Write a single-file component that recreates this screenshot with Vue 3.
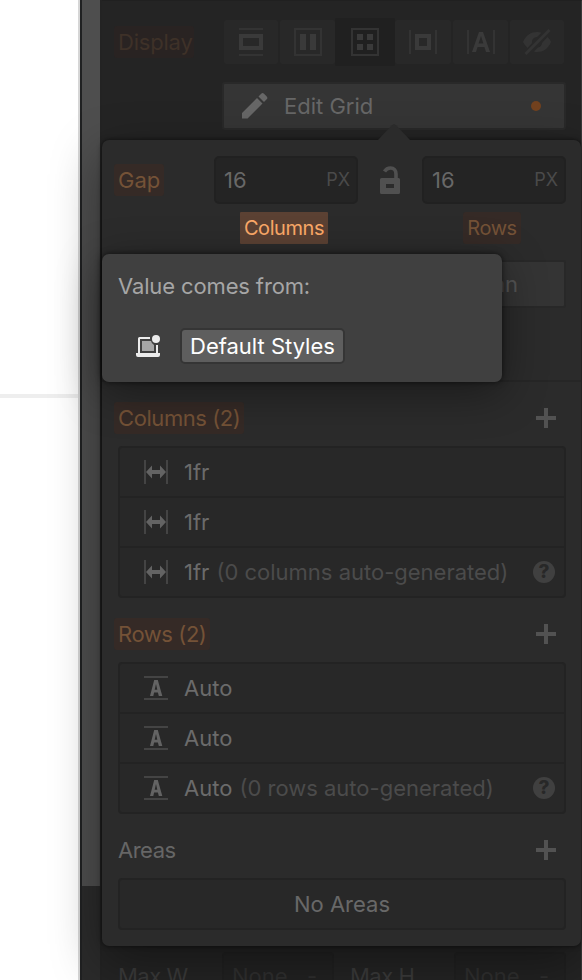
<script setup>
    import { reactive } from 'vue';

    const displayModes = ['block', 'flex', 'grid', 'inline-block', 'inline', 'none'];

    const state = reactive({
        display: 'grid',
        columnGap: 16,
        rowGap: 16
    });

    const tracks = [
        {
            title: 'Columns (2)',
            icon: 'fr',
            items: [{size: '1fr'}, {size: '1fr'}, {size: '1fr', note: '(0 columns auto-generated)'}]
        },
        {
            title: 'Rows (2)',
            icon: 'auto',
            items: [{size: 'Auto'}, {size: 'Auto'}, {size: 'Auto', note: '(0 rows auto-generated)'}]
        }
    ];
</script>

<template>
    <div class="main">
        <div class="canvas">
            <div class="rule"></div>
        </div>
        <div class="gutter">
            <div class="thumb"></div>
        </div>
        <div class="panel">
            <div class="row display">
                <span class="chip faint">Display</span>
                <div class="modes">
                    <button
                        v-for="mode in displayModes"
                        :key="mode"
                        type="button"
                        :class="{active: state.display === mode}"
                        @click="state.display = mode"
                    >
                        <svg width="28" height="28" viewBox="0 0 28 28">
                            <g v-if="mode === 'block'">
                                <path class="thin" d="M2 0h24v2H2zM2 26h24v2H2z" />
                                <path fill-rule="evenodd" d="M2 6h24v16H2zM6 10v8h16v-8z" />
                            </g>
                            <g v-else-if="mode === 'flex'">
                                <path class="thin" fill-rule="evenodd" d="M0 0h28v28H0zM2 2v24h24V2z" />
                                <path d="M6 6h6v16H6zM16 6h6v16h-6z" />
                            </g>
                            <g v-else-if="mode === 'grid'">
                                <path class="thin" fill-rule="evenodd" d="M0 0h28v28H0zM2 2v24h24V2z" />
                                <path d="M6 6h6v6H6zM16 6h6v6h-6zM6 16h6v6H6zM16 16h6v6h-6z" />
                            </g>
                            <g v-else-if="mode === 'inline-block'">
                                <path class="thin" d="M0 2h2v24H0zM26 2h2v24h-2z" />
                                <path fill-rule="evenodd" d="M6 6h16v16H6zM10 10v8h8v-8z" />
                            </g>
                            <g v-else-if="mode === 'inline'">
                                <path class="thin" d="M0 2h2v24H0zM26 2h2v24h-2z" />
                                <path fill-rule="evenodd" d="M5 24L12 4h4l7 20h-4l-1.600-5h-6.800L9 24zM11.600 15.500h4.800L14 8z" />
                            </g>
                            <g v-else class="thin">
                                <path d="M0 14C3 7 8 4 14 4c2 0 3 .3 4.500 .8L14 9a5 5 0 0 0-5 6L4.500 20C2.500 18 1 16 0 14z" />
                                <path d="M28 14c-3 7-8 10-14 10-1 0-2-.1-3-.5l4-4a5 5 0 0 0 4-4.500L24.500 9c1.500 1.500 2.700 3 3.500 5z" />
                                <path d="M1.500 25L25.500 1l2 2L3.500 27z" />
                            </g>
                        </svg>
                    </button>
                </div>
            </div>
            <button type="button" class="edit">
                <svg width="26" height="26" viewBox="0 0 26 26">
                    <path d="M0 20L15 5l5.500 5.500L5.500 25.500H0zM16.500 3.500l2.700-2.700a2 2 0 0 1 2.800 0L24.700 3.500a2 2 0 0 1 0 2.800L22 9z" />
                </svg>
                <span>Edit Grid</span>
                <i class="dot"></i>
            </button>
            <div class="row sizes">
                <span>Max W</span>
                <div class="none"><span>None</span><span>-</span></div>
                <span class="second">Max H</span>
                <div class="none"><span>None</span><span>-</span></div>
            </div>
        </div>

        <div class="popover">
            <div class="gap">
                <div class="gap-label"><span class="chip">Gap</span></div>
                <div class="field"><span>{{ state.columnGap }}</span><small>PX</small></div>
                <svg class="lock" width="20" height="28" viewBox="0 0 20 28">
                    <path d="M4.500 5.500C6 3 8 2 10.500 2c3.500 0 5.500 2.500 5.500 6v4" fill="none" stroke="#505050" stroke-width="3.600" />
                    <path fill-rule="evenodd" d="M1.500 12h17a1.500 1.500 0 0 1 1.500 1.500v13a1.500 1.500 0 0 1-1.500 1.500h-17A1.500 1.500 0 0 1 0 26.500v-13A1.500 1.500 0 0 1 1.500 12zM6 18v4h8v-4z" />
                </svg>
                <div class="field"><span>{{ state.rowGap }}</span><small>PX</small></div>
                <span class="chip small bright under-first">Columns</span>
                <span class="chip small under-second">Rows</span>
            </div>
            <div class="flow">
                <div class="direction">
                    <span>Column</span>
                </div>
            </div>
            <div v-for="track in tracks" :key="track.title" class="section">
                <div class="head">
                    <span class="chip">{{ track.title }}</span>
                    <svg width="20" height="20" viewBox="0 0 20 20"><path d="M8 0h4v8h8v4h-8v8H8v-8H0V8h8z" /></svg>
                </div>
                <div class="list">
                    <div v-for="(item, index) in track.items" :key="index" class="item">
                        <svg v-if="track.icon === 'fr'" width="24" height="24" viewBox="0 0 24 24">
                            <path class="thin" d="M0 0h2v24H0zM22 0h2v24h-2z" />
                            <path d="M2 12L8 5.500V10h8V5.500L22 12l-6 6.500V14H8v4.500z" />
                        </svg>
                        <svg v-else width="24" height="24" viewBox="0 0 24 24">
                            <path class="thin" d="M0 0h24v2H0zM0 22h24v2H0z" />
                            <path fill-rule="evenodd" d="M6 20l4.200-16h3.600L18.300 20h-3.500l-.9-3.500h-3.800L9.300 20zM10.700 13.700h2.600L12 8z" />
                        </svg>
                        <span class="size">{{ item.size }}</span>
                        <span v-if="item.note" class="note">{{ item.note }}</span>
                        <span v-if="item.note" class="help">?</span>
                    </div>
                </div>
            </div>
            <div class="section areas">
                <div class="head">
                    <span>Areas</span>
                    <svg width="20" height="20" viewBox="0 0 20 20"><path d="M8 0h4v8h8v4h-8v8H8v-8H0V8h8z" /></svg>
                </div>
                <div class="list empty">No Areas</div>
            </div>
        </div>

        <div class="source">
            <div class="title">Value comes from:</div>
            <div class="origin">
                <svg width="24" height="22" viewBox="0 0 24 22">
                    <path d="M6 6h9a6 6 0 0 0 3 4v6H6z" fill="#a6a6a6" />
                    <path d="M2 3.500A1.500 1.500 0 0 1 3.500 2H14v2H4v14h16v-8h2v8h2v2a2 2 0 0 1-2 2H2a2 2 0 0 1-2-2v-2h2z" fill="#ececec" />
                    <circle cx="20" cy="4" r="4" fill="#ececec" />
                </svg>
                <span class="tag">Default Styles</span>
            </div>
        </div>
    </div>
</template>

<style>
    body{
        background: #FFFFFF;
        overflow: hidden;
    }
</style>

<style scoped>
    div.main{
        position: relative;
        display: flex;
        width: 582px;
        height: 980px;
        overflow: hidden;
        font-family: Inter, "Liberation Sans", sans-serif;
        font-size: 22px;
        line-height: 32px;
        color: #686868;
    }
    .main *{
        box-sizing: border-box;
    }
    svg{
        display: block;
        flex: none;
        fill: currentColor;
    }
    button{
        padding: 0;
        font: inherit;
        border: none;
    }
    div.canvas{
        width: 80px;
        background: #FFFFFF;
        border-right: 2px solid #D6D6D6;
    }
    div.rule{
        height: 4px;
        margin-top: 394px;
        background: #EEEEEE;
    }
    div.gutter{
        width: 22px;
        background: #2B2B2B;
        border-left: 2px solid #202122;
        border-right: 2px solid #232323;
    }
    div.thumb{
        height: 886px;
        background: #4E4E4E;
    }
    div.panel{
        flex: 1;
        padding-top: 17px;
        background: #242424;
        border-top: 1px solid #202020;
        border-right: 1px solid #3A3A3A;
    }
    div.row{
        display: flex;
        align-items: center;
    }
    .chip{
        padding: 0 4px;
        height: 32px;
        border-radius: 3px;
        background: #352A26;
        color: #745237;
        letter-spacing: -0.43px;
        white-space: nowrap;
    }
    .chip.small{
        font-size: 20px;
    }
    .chip.faint{
        background: #292322;
        color: #3E3128;
        letter-spacing: -0.2px;
    }
    .chip.bright{
        background: #5B4133;
        color: #FBA968;
        border-radius: 1px;
    }
    div.display{
        height: 47px;
        padding-left: 12px;
    }
    .display .chip{
        width: 80px;
    }
    div.modes{
        display: grid;
        grid-template-columns: 54px 55px 56px 56px 55px 54px;
        column-gap: 2px;
        margin-left: 30px;
    }
    .modes button{
        height: 44px;
        display: flex;
        align-items: center;
        justify-content: center;
        background: #282828;
        color: #3A3A3A;
        border-radius: 2px;
    }
    .modes button.active{
        height: 48px;
        margin: -2px;
        background: #202020;
    }
    .modes .thin{
        fill: #333333;
    }
    button.edit{
        display: flex;
        align-items: center;
        width: 344px;
        height: 48px;
        margin: 17px 0 0 120px;
        padding: 0 23px 0 18px;
        background: #353535;
        border: 2px solid #292929;
        border-radius: 3px;
        color: #676767;
    }
    .edit span{
        flex: 1;
        margin-left: 16px;
        text-align: left;
    }
    i.dot{
        width: 10px;
        height: 10px;
        border-radius: 50%;
        background: #73421F;
    }
    div.sizes{
        margin-top: 822px;
        padding-left: 16px;
        color: #3B3B3B;
    }
    .sizes > span{
        width: 104px;
        letter-spacing: -0.5px;
    }
    .sizes .second{
        margin-left: 16px;
    }
    div.none{
        display: flex;
        justify-content: space-between;
        flex: none;
        width: 112px;
        height: 48px;
        padding: 6px 15px 0 8px;
        border: 2px solid #202020;
        border-radius: 4px;
        background: #222222;
        color: #303030;
    }
    div.popover{
        position: absolute;
        left: 102px;
        top: 140px;
        width: 479px;
        height: 806px;
        background: #2B2B2B;
        border-radius: 7px;
        box-shadow: 0 0 5px rgba(0, 0, 0, 0.6), 0 16px 50px rgba(0, 0, 0, 0.4);
    }
    div.popover::before{
        content: "";
        position: absolute;
        left: 276px;
        top: -16px;
        width: 32px;
        height: 16px;
        background: #2B2B2B;
        clip-path: polygon(0 100%, 43% 8%, 50% 0, 57% 8%, 100% 100%);
    }
    div.gap{
        display: grid;
        grid-template-columns: 100px 144px 64px 144px;
        grid-template-rows: 48px 32px;
        row-gap: 8px;
        align-items: center;
        padding: 16px 15px 0 12px;
    }
    .gap-label{
        display: flex;
    }
    .gap-label .chip{
        letter-spacing: 0;
    }
    div.field{
        display: flex;
        align-items: center;
        justify-content: space-between;
        height: 48px;
        padding: 0 6px 0 8px;
        background: #242424;
        border: 2px solid #212121;
        border-radius: 5px;
    }
    .field small{
        font-size: 18px;
        color: #4A4A4A;
    }
    svg.lock{
        justify-self: center;
        fill: #505050;
    }
    .under-first{
        grid-column: 2;
        justify-self: center;
        margin-right: 4px;
    }
    .under-second{
        grid-column: 4;
        justify-self: center;
        margin-right: 4px;
    }
    div.flow{
        height: 138px;
        padding: 16px 15px 0 112px;
        border-bottom: 2px solid #262626;
    }
    div.direction{
        display: flex;
        align-items: center;
        justify-content: flex-end;
        height: 48px;
        padding-right: 46px;
        background: #343434;
        border: 2px solid #282828;
        border-radius: 3px;
        color: #545454;
    }
    div.section{
        padding: 20px 15px 0 16px;
    }
    div.head{
        display: flex;
        align-items: center;
        justify-content: space-between;
        padding-right: 10px;
        color: #666666;
        letter-spacing: -0.5px;
    }
    .head .chip{
        margin-left: -4px;
    }
    .head svg{
        fill: #525252;
    }
    div.list{
        margin-top: 12px;
        background: #282828;
        border: 2px solid #232323;
        border-radius: 4px;
    }
    div.item{
        display: flex;
        align-items: center;
        height: 48px;
        padding: 0 9px 0 24px;
        color: #636363;
    }
    div.item + div.item{
        height: 50px;
        border-top: 2px solid #232323;
    }
    .item .thin{
        fill: #444444;
    }
    .size{
        margin-left: 16px;
        color: #6B6B6B;
    }
    .note{
        margin-left: 7px;
        color: #4B4B4B;
        white-space: nowrap;
    }
    .help{
        width: 22px;
        height: 22px;
        margin-left: auto;
        border-radius: 50%;
        background: #404040;
        color: #282828;
        font-size: 19px;
        font-weight: 800;
        line-height: 22px;
        text-align: center;
    }
    div.empty{
        height: 52px;
        line-height: 48px;
        text-align: center;
    }
    div.source{
        position: absolute;
        left: 102px;
        top: 254px;
        width: 400px;
        height: 128px;
        padding: 16px;
        background: #404040;
        border-radius: 7px;
        box-shadow: 0 0 6px rgba(0, 0, 0, 0.6), 0 10px 44px rgba(0, 0, 0, 0.4);
        color: #A6A6A6;
    }
    div.title{
        letter-spacing: -0.13px;
    }
    div.origin{
        display: flex;
        align-items: center;
        margin-top: 26px;
        padding-left: 18px;
    }
    .tag{
        height: 36px;
        margin-left: 20px;
        padding: 0 8px;
        background: #5E5E5E;
        border: 2px solid #353535;
        border-radius: 5px;
        color: #FFFFFF;
    }
</style>
